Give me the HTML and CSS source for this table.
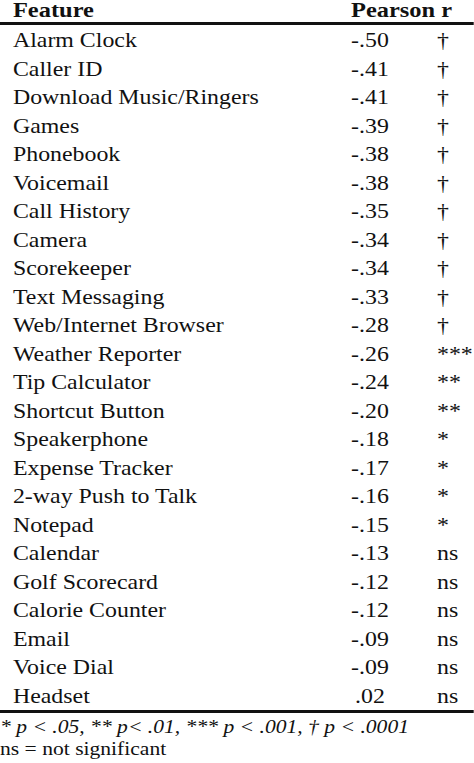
FILE: index.html
```html
<!DOCTYPE html>
<html>
<head>
<meta charset="utf-8">
<link rel="stylesheet" href="styles.css">
</head>
<body>
<div class="sheet">
  <div class="head">
    <span class="c-feat">Feature</span>
    <span class="c-r">Pearson r</span>
  </div>
  <div class="rows">
    <div class="row"><span class="c-feat">Alarm Clock</span><span class="c-val">-.50</span><span class="c-sig">†</span></div>
    <div class="row"><span class="c-feat">Caller ID</span><span class="c-val">-.41</span><span class="c-sig">†</span></div>
    <div class="row"><span class="c-feat">Download Music/Ringers</span><span class="c-val">-.41</span><span class="c-sig">†</span></div>
    <div class="row"><span class="c-feat">Games</span><span class="c-val">-.39</span><span class="c-sig">†</span></div>
    <div class="row"><span class="c-feat">Phonebook</span><span class="c-val">-.38</span><span class="c-sig">†</span></div>
    <div class="row"><span class="c-feat">Voicemail</span><span class="c-val">-.38</span><span class="c-sig">†</span></div>
    <div class="row"><span class="c-feat">Call History</span><span class="c-val">-.35</span><span class="c-sig">†</span></div>
    <div class="row"><span class="c-feat">Camera</span><span class="c-val">-.34</span><span class="c-sig">†</span></div>
    <div class="row"><span class="c-feat">Scorekeeper</span><span class="c-val">-.34</span><span class="c-sig">†</span></div>
    <div class="row"><span class="c-feat">Text Messaging</span><span class="c-val">-.33</span><span class="c-sig">†</span></div>
    <div class="row"><span class="c-feat">Web/Internet Browser</span><span class="c-val">-.28</span><span class="c-sig">†</span></div>
    <div class="row"><span class="c-feat">Weather Reporter</span><span class="c-val">-.26</span><span class="c-sig">***</span></div>
    <div class="row"><span class="c-feat">Tip Calculator</span><span class="c-val">-.24</span><span class="c-sig">**</span></div>
    <div class="row"><span class="c-feat">Shortcut Button</span><span class="c-val">-.20</span><span class="c-sig">**</span></div>
    <div class="row"><span class="c-feat">Speakerphone</span><span class="c-val">-.18</span><span class="c-sig">*</span></div>
    <div class="row"><span class="c-feat">Expense Tracker</span><span class="c-val">-.17</span><span class="c-sig">*</span></div>
    <div class="row"><span class="c-feat">2-way Push to Talk</span><span class="c-val">-.16</span><span class="c-sig">*</span></div>
    <div class="row"><span class="c-feat">Notepad</span><span class="c-val">-.15</span><span class="c-sig">*</span></div>
    <div class="row"><span class="c-feat">Calendar</span><span class="c-val">-.13</span><span class="c-sig">ns</span></div>
    <div class="row"><span class="c-feat">Golf Scorecard</span><span class="c-val">-.12</span><span class="c-sig">ns</span></div>
    <div class="row"><span class="c-feat">Calorie Counter</span><span class="c-val">-.12</span><span class="c-sig">ns</span></div>
    <div class="row"><span class="c-feat">Email</span><span class="c-val">-.09</span><span class="c-sig">ns</span></div>
    <div class="row"><span class="c-feat">Voice Dial</span><span class="c-val">-.09</span><span class="c-sig">ns</span></div>
    <div class="row"><span class="c-feat">Headset</span><span class="c-val">.02</span><span class="c-sig">ns</span></div>
  </div>
  <div class="notes">
    <div class="note"><i>* p &lt; .05, ** p&lt; .01, *** p &lt; .001, † p &lt; .0001</i></div>
    <div class="note">ns = not significant</div>
  </div>
</div>
</body>
</html>
```
FILE: styles.css
```css
html, body {
  margin: 0;
  padding: 0;
  background: #ffffff;
  overflow: hidden;
}
.sheet {
  width: 417.25px;
  height: 763px;
  transform: scaleX(1.136);
  transform-origin: 0 0;
  font-family: "Liberation Serif", "Times New Roman", serif;
  font-size: 21px;
  color: #111111;
}
.head {
  display: flex;
  justify-content: space-between;
  padding-left: 11.4px;
  padding-right: 19.3px;
  height: 22px;
  line-height: 20px;
  font-size: 21.5px;
  font-weight: bold;
  white-space: nowrap;
}
.rows {
  padding-top: 1px;
  border-top: 3px solid #111111;
  border-bottom: 3px solid #111111;
}
.row {
  display: grid;
  grid-template-columns: 284.3px 60px 1fr;
  padding-left: 11.4px;
  height: 28.5px;
  line-height: 28.5px;
  white-space: nowrap;
}
.c-val {
  text-align: center;
}
.c-sig {
  padding-left: 29px;
}
.notes {
  font-size: 19px;
  line-height: 22px;
  padding-top: 2.6px;
}
.note {
  white-space: nowrap;
}
```
